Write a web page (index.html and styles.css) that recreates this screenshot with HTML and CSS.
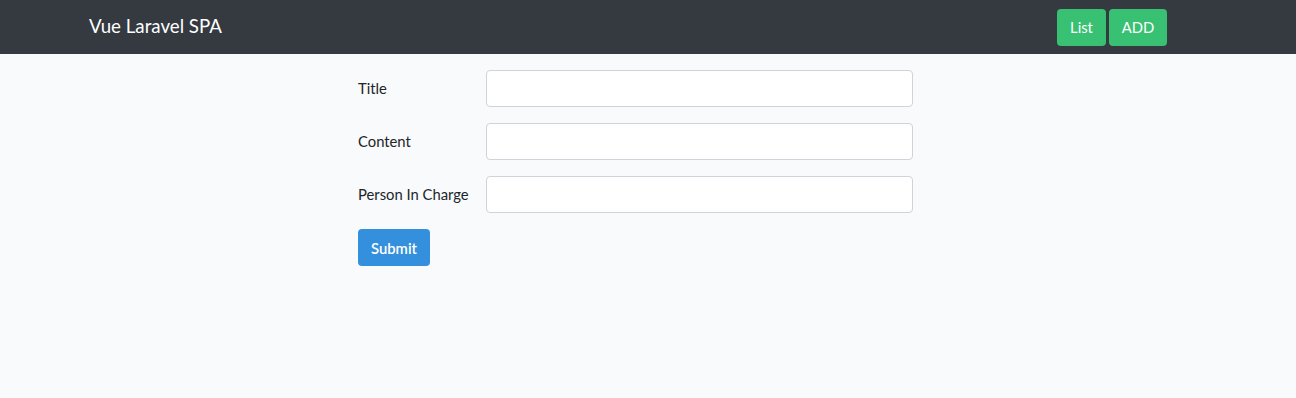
FILE: index.html
```html
<!DOCTYPE html>
<html>
<head>
<meta charset="utf-8">
<link rel="stylesheet" href="styles.css">
</head>
<body>
<nav class="navbar">
  <a class="brand" href="#">Vue Laravel SPA</a>
  <div class="nav-actions">
    <a class="btn btn-success btn-list" href="#">List</a>
    <a class="btn btn-success btn-add" href="#">ADD</a>
  </div>
</nav>
<main class="content">
  <form class="form">
    <div class="row">
      <label class="label">Title</label>
      <input class="input" type="text">
    </div>
    <div class="row">
      <label class="label">Content</label>
      <input class="input" type="text">
    </div>
    <div class="row">
      <label class="label">Person In Charge</label>
      <input class="input" type="text">
    </div>
    <button class="btn btn-primary" type="button">Submit</button>
  </form>
</main>
</body>
</html>
```
FILE: styles.css
```css
html, body {
  margin: 0;
  padding: 0;
}
body {
  background: #f8fafc;
  font-family: Lato, "Noto Sans", sans-serif;
  font-size: 14.8px;
  line-height: 1.6;
  color: #212529;
  height: 398px;
}
.navbar {
  background: #343a40;
  height: 54px;
  display: flex;
  align-items: center;
  justify-content: space-between;
  padding: 0 129px 0 89px;
  box-sizing: border-box;
}
.brand {
  color: #fff;
  font-size: 18.7px;
  text-decoration: none;
}
.nav-actions {
  display: flex;
  gap: 3px;
  margin-top: 1px;
}
.btn {
  display: inline-flex;
  align-items: center;
  justify-content: center;
  height: 37px;
  border-radius: 4px;
  border: none;
  color: #fff;
  font-family: inherit;
  font-size: 14.8px;
  text-decoration: none;
  box-sizing: border-box;
}
.btn-success {
  background: #38c172;
}
.btn-list { width: 49px; }
.btn-add { width: 58px; }
.btn-primary {
  background: #3490dc;
  width: 72px;
  padding: 0;
  font-weight: 600;
}
.content {
  padding: 16px 0 0 358px;
}
.form {
  width: 555px;
  display: flex;
  flex-direction: column;
  align-items: flex-start;
  gap: 16px;
}
.row {
  display: flex;
  align-items: center;
  width: 100%;
}
.label {
  width: 128px;
  flex: none;
}
.input {
  width: 427px;
  height: 37px;
  box-sizing: border-box;
  border: 1px solid #ced4da;
  border-radius: 4px;
  background: #fff;
  margin: 0;
}
```
